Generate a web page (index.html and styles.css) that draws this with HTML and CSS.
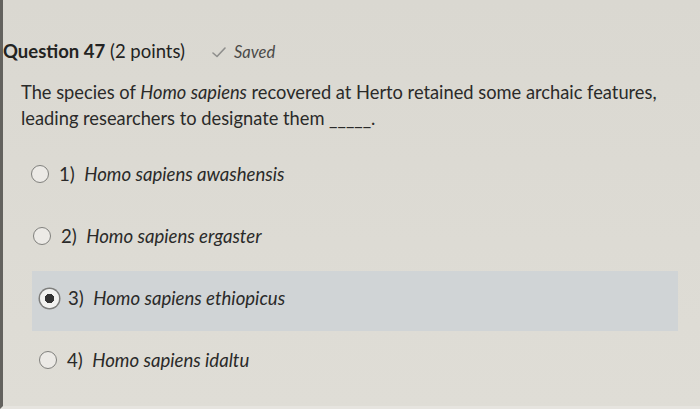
FILE: index.html
```html
<!DOCTYPE html>
<html lang="en">
<head>
<meta charset="utf-8">
<title>Question 47</title>
<link rel="stylesheet" href="styles.css">
</head>
<body>
<div class="page">
  <div class="header">
    <h2 class="title"><span class="qnum">Question 47</span> (2 points)</h2>
    <span class="saved">
      <svg class="check" width="14" height="11" viewBox="0 0 14 11" aria-hidden="true"><path d="M1 6 L5 9.5 L13 1" fill="none" stroke="#8e8e8c" stroke-width="1.6" stroke-linecap="round" stroke-linejoin="round"/></svg>
      <em>Saved</em>
    </span>
  </div>
  <p class="prompt">The species of <em>Homo sapiens</em> recovered at Herto retained some archaic features, leading researchers to designate them _____.</p>
  <div class="options">
    <div class="option"><span class="radio"></span><span class="label">1)&nbsp; <em>Homo sapiens awashensis</em></span></div>
    <div class="option"><span class="radio"></span><span class="label">2)&nbsp; <em>Homo sapiens ergaster</em></span></div>
    <div class="option selected"><span class="radio checked"></span><span class="label">3)&nbsp; <em>Homo sapiens ethiopicus</em></span></div>
    <div class="option"><span class="radio"></span><span class="label">4)&nbsp; <em>Homo sapiens idaltu</em></span></div>
  </div>
</div>
</body>
</html>
```
FILE: styles.css
```css
html, body {
  margin: 0;
  padding: 0;
  background: #dcdad3;
}
.page {
  box-sizing: border-box;
  width: 700px;
  height: 409px;
  border-left: 3px solid #63625e;
  border-bottom: 3px solid #e6e4df;
  background: linear-gradient(180deg, #dad8d1 0%, #dddbd4 60%, #dfddd6 100%);
  font-family: Lato, "Open Sans", sans-serif;
  color: #2a2a29;
  overflow: hidden;
}
.header {
  display: flex;
  align-items: baseline;
  padding-top: 39px;
}
.title {
  margin: 0;
  font-size: 18.5px;
  font-weight: 400;
  line-height: 24px;
  color: #232322;
}
.qnum {
  font-weight: 700;
}
.saved {
  margin-left: 27px;
  display: flex;
  align-items: baseline;
  gap: 8px;
  font-size: 16.5px;
  color: #4a4a48;
}
.prompt {
  margin: 16px 30px 0 18px;
  font-size: 18.3px;
  line-height: 26px;
}
.options {
  margin-top: 16px;
  display: flex;
  flex-direction: column;
  gap: 2px;
}
.option {
  box-sizing: border-box;
  height: 60px;
  padding-bottom: 6px;
  display: flex;
  align-items: center;
  font-size: 18.6px;
}
.option:nth-child(1) { padding-left: 28px; }
.option:nth-child(2) { padding-left: 30px; }
.option:nth-child(4) { padding-left: 36px; }
.option.selected {
  margin-left: 29px;
  width: 646px;
  padding-left: 5px;
  background: #d0d4d6;
}
.radio {
  box-sizing: border-box;
  width: 18px;
  height: 18px;
  border-radius: 50%;
  border: 1.5px solid #80807d;
  background: #eceae6;
  flex: none;
  margin-right: 10px;
}
.radio.checked {
  width: 19px;
  height: 19px;
  border: none;
  background: radial-gradient(circle, #333 0 4.5px, #f2f2f0 5px);
  box-shadow: 0 0 0 1.5px #7e7e7c;
  margin-left: 3px;
  margin-right: 9px;
}
.label em {
  font-style: italic;
}
```
